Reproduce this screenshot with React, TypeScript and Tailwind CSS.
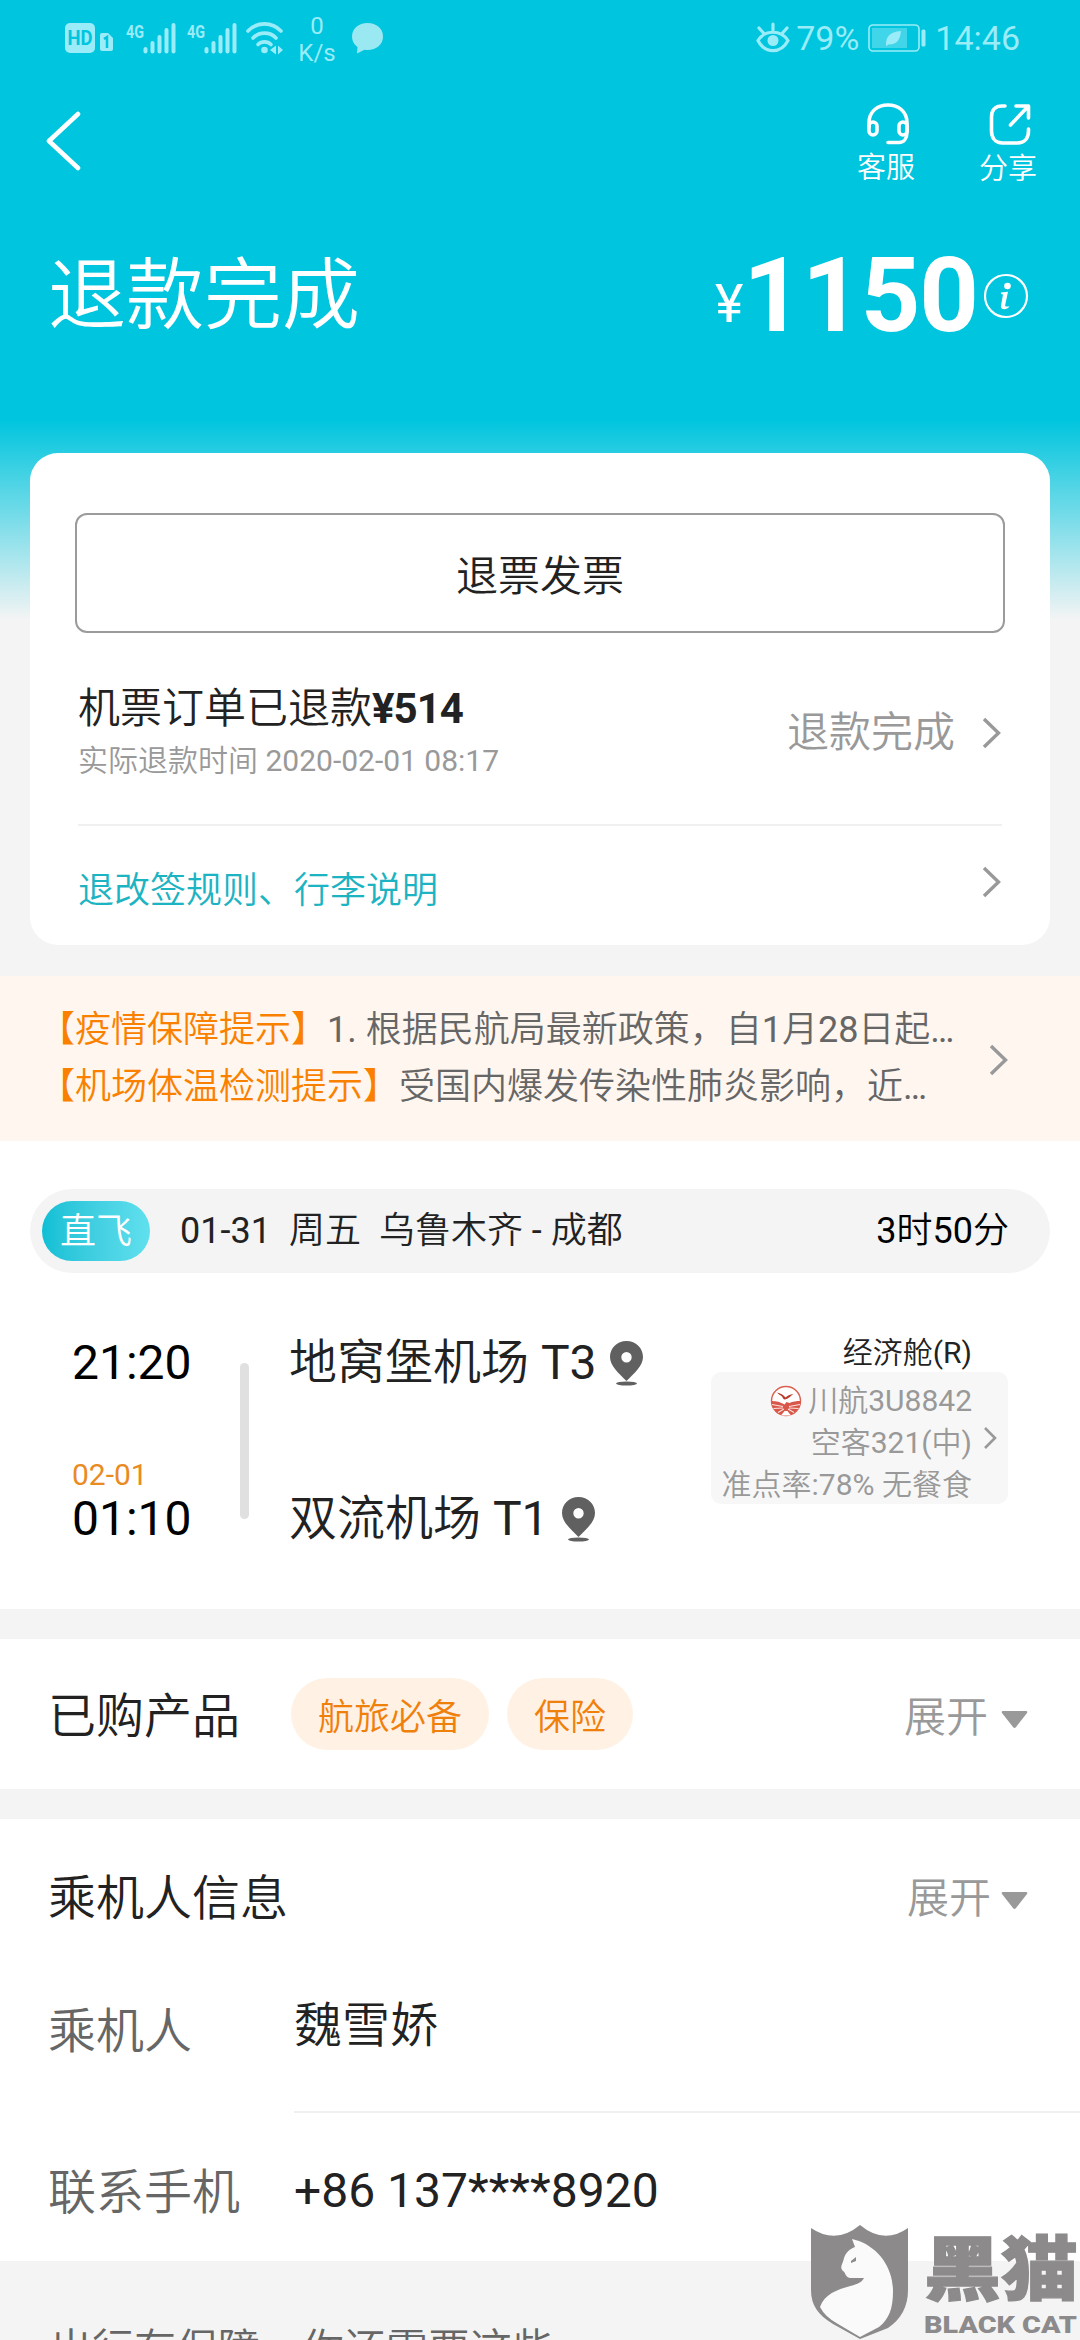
import type { ReactNode } from 'react';
import clsx from 'clsx';

const STATUS_COLOR = '#99ecf8';

function SignalIcon() {
  return (
    <svg width="52" height="34" viewBox="0 0 52 34" fill={STATUS_COLOR}>
      <text x="0" y="17" fontSize="19" fontWeight="700" textLength="18" lengthAdjust="spacingAndGlyphs">4G</text>
      <rect x="17.500" y="26" width="4" height="6.500" rx="2" />
      <rect x="24.500" y="20" width="4" height="12.500" rx="2" />
      <rect x="31.500" y="14" width="4" height="18.500" rx="2" />
      <rect x="38.500" y="7" width="4" height="25.500" rx="2" />
      <rect x="45.500" y="2" width="4" height="30.500" rx="2" />
    </svg>
  );
}

function StatusBar() {
  return (
    <div className="flex h-[76px] items-center pl-[65px] pr-[60px] text-[#99ecf8]">
      <svg width="49" height="30" viewBox="0 0 49 30">
        <rect width="30" height="30" rx="5" fill={STATUS_COLOR} />
        <text x="2.500" y="22" fontSize="20" fontWeight="700" fill="#00c5de" textLength="25" lengthAdjust="spacingAndGlyphs">HD</text>
        <path d="M37 10h6l5 5v11a2 2 0 0 1-2 2h-9a2 2 0 0 1-2-2V12a2 2 0 0 1 2-2z" fill={STATUS_COLOR} />
        <path d="M39 16l3-2v11" fill="none" stroke="#00c5de" strokeWidth="2.500" />
      </svg>
      <div className="ml-[12px] flex gap-[9px]">
        <SignalIcon />
        <SignalIcon />
      </div>
      <svg className="ml-[6px]" width="40" height="34" viewBox="0 0 40 34" fill="none" stroke={STATUS_COLOR} strokeWidth="3.600" strokeLinecap="round">
        <path d="M3 10c9-9.500 24-9.500 33 0" />
        <path d="M8 17c6-6.500 17-6.500 23 0" />
        <path d="M13 23.500c3.500-3.500 9.500-3.500 13 0" />
        <circle cx="19.500" cy="29" r="3.300" fill={STATUS_COLOR} stroke="none" />
        <path d="M25 29l6-4.500v9zM38 29l-5-4.500v9z" fill={STATUS_COLOR} stroke="none" />
      </svg>
      <div className="ml-[14px] mt-[2px] flex w-[36px] flex-col items-center gap-[3px] text-[24px] leading-[24px]">
        <span>0</span>
        <span>K/s</span>
      </div>
      <svg className="ml-[16px]" width="33" height="32" viewBox="0 0 33 32" fill="#99e8f2">
        <path d="M16.500 1C25.500 1 32 6.500 32 14.500S25.500 28 16.500 28c-1 0-2-.100-3-.300L6 31.500l.500-6.500C3 22.500 1 19 1 14.500 1 6.500 7.500 1 16.500 1z" />
      </svg>

      <div className="ml-auto flex items-center">
        <svg width="34" height="32" viewBox="0 0 34 32" fill="none" stroke={STATUS_COLOR} strokeWidth="3.200" strokeLinecap="round">
          <path d="M2 18.500C9 7.500 25 7.500 32 18.500 25 32 9 32 2 18.500z" />
          <path d="M17 8V2M7.500 11L3 6M26.500 11L31 6" />
          <circle cx="17" cy="18.500" r="5.500" fill={STATUS_COLOR} stroke="none" />
        </svg>
        <span className="ml-[6px] text-[34px] leading-none">79%</span>
        <svg className="ml-[9px]" width="59" height="28" viewBox="0 0 59 28">
          <rect x="1" y="1" width="50" height="26" rx="4" fill="none" stroke={STATUS_COLOR} strokeWidth="1.600" />
          <rect x="4" y="4" width="35" height="20" fill="#40d5e8" />
          <path d="M18 21c0-8 3-13 15-14-1 9-4 14-13 13.500l-1.500 2z" fill={STATUS_COLOR} />
          <rect x="53.500" y="5.500" width="4" height="17" rx="1.500" fill={STATUS_COLOR} />
        </svg>
        <span className="ml-[8px] text-[34px] leading-none">14:46</span>
      </div>
    </div>
  );
}

function Chevron({ className }: { className?: string }) {
  return (
    <svg className={className} width="20" height="34" viewBox="0 0 20 34" fill="none" stroke="#999" strokeWidth="3.400">
      <path d="M2 3l14.500 14L2 31" />
    </svg>
  );
}

function PinIcon() {
  return (
    <svg className="ml-[12px]" width="35" height="46" viewBox="0 0 35 46" fill="#606060">
      <path fillRule="evenodd" d="M17.500 1C27 1 34 8 34 17c0 9-9 16.500-16.500 24C10 33.500 1 26 1 17 1 8 8 1 17.500 1zm0 11a5.200 5.200 0 1 0 0 10.400 5.200 5.200 0 0 0 0-10.400z" />
      <ellipse cx="17.500" cy="43.500" rx="10.500" ry="2" />
    </svg>
  );
}

function NavAction({ label, className, children }: { label: string; className?: string; children: ReactNode }) {
  return (
    <div className={clsx('flex w-[60px] flex-col items-center gap-[7px] text-[29px] leading-[32px] text-white', className)}>
      <svg className="ml-[3px]" width="44" height="44" viewBox="0 0 44 44" fill="none" stroke="#fff" strokeWidth="3.600" strokeLinecap="round" strokeLinejoin="round">
        {children}
      </svg>
      <span>{label}</span>
    </div>
  );
}

function Header() {
  return (
    <>
      <div className="flex h-[124px] items-start pl-[45px] pr-[42px]">
        <svg className="mt-[35px]" width="38" height="60" viewBox="0 0 38 60" fill="none" stroke="#fff" strokeWidth="4.600" strokeLinecap="round" strokeLinejoin="round">
          <path d="M33 3L4 30l29 27" />
        </svg>
        <NavAction label="客服" className="ml-auto mt-[25px]">
          <path d="M3 26v-4C3 10 12 4 22 4s19 6 19 18v9c0 6-3 10.500-8 10.500H22" />
          <rect x="3" y="21" width="8" height="13" rx="4" />
          <rect x="33" y="21" width="8" height="13" rx="4" />
        </NavAction>
        <NavAction label="分享" className="ml-[62px] mt-[26px]">
          <path d="M17 4h-3C7 4 3.500 8 3.500 15v14c0 7 4 12 11 12h15c7 0 11-5 11-12v-2" />
          <path d="M28 4h12.500v12M40 4.500L22.500 23" />
        </NavAction>
      </div>
      <div className="flex h-[186px] items-center justify-between pl-[48px] pr-[51px] text-white">
        <span className="mt-[8px] text-[78px] leading-none">退款完成</span>
        <div className="flex items-center">
          <span className="mt-[22px] text-[54px] leading-none">¥</span>
          <span className="mt-[5px] text-[104px] font-bold leading-none tracking-[-1px]">1150</span>
          <svg className="mt-[6px] ml-[5px]" width="46" height="46" viewBox="0 0 46 46">
            <circle cx="23" cy="23" r="21" fill="none" stroke="#fff" strokeWidth="2.200" />
            <circle cx="24.500" cy="13" r="3.300" fill="#fff" />
            <path d="M18 19.500l7-.8-2.800 13.300c-.300 1.600 1 1.800 4.300 1.200-1.500 2.200-3.200 3-5.200 3-2.500 0-3.800-1.200-3.300-3.700l2-11-2-.4z" fill="#fff" />
          </svg>
        </div>
      </div>
    </>
  );
}

function RefundCard() {
  return (
    <div className="mx-[30px] mt-[67px] h-[492px] rounded-[28px] bg-white px-[45px] pt-[60px] text-[#222]">
      <div className="flex h-[120px] items-center justify-center rounded-[12px] border-2 border-[#9b9b9b] text-[42px] leading-none">
        <span className="mt-[7px]">退票发票</span>
      </div>
      <div className="mx-[3px] flex h-[193px] items-start justify-between border-b-2 border-[#f0f0f0] pt-[54px]">
        <div className="flex flex-col gap-[14px]">
          <span className="text-[42px] leading-[44px]">
            机票订单已退款<b className="tracking-[-1px]">¥514</b>
          </span>
          <span className="text-[30px] leading-[32px] text-[#999]">实际退款时间 2020-02-01 08:17</span>
        </div>
        <div className="mt-[23px] flex items-center text-[#999]">
          <span className="text-[42px] leading-[46px]">退款完成</span>
          <Chevron className="ml-[27px]" />
        </div>
      </div>
      <div className="mx-[3px] flex h-[119px] items-center justify-between">
        <span className="mt-[10px] text-[36px] leading-none text-[#1cb3c2]">退改签规则、行李说明</span>
        <Chevron className="-mt-[8px]" />
      </div>
    </div>
  );
}

function NoticeBar() {
  return (
    <div className="mt-[31px] flex h-[165px] items-start justify-between bg-[#fff6f0] pl-[39px] pr-[71px] pt-[26px] text-[36px] leading-[57px] text-[#666]">
      <div className="whitespace-nowrap">
        <p><span className="text-[#fa8100]">【疫情保障提示】</span>1. 根据民航局最新政策，自1月28日起…</p>
        <p><span className="text-[#fa8100]">【机场体温检测提示】</span>受国内爆发传染性肺炎影响，近…</p>
      </div>
      <Chevron className="mt-[41px]" />
    </div>
  );
}

function AirlineLogo() {
  return (
    <svg className="mr-[6px]" width="32" height="32" viewBox="0 0 32 32">
      <circle cx="16" cy="16" r="14.500" fill="#fff" stroke="#d9604f" strokeWidth="1.400" />
      <path d="M1.500 16c5 0 9 1 13 3.500l2-2.500 3 1c3-1.500 7-2 11-2A14.500 14.500 0 0 1 16 30.500 14.500 14.500 0 0 1 1.500 16z" fill="#d8574a" />
      <path d="M2 19.500l11 2M3.500 23.500l9.500-.5M8 27.500l6-3.500M30 19.500l-11 2M28.500 23.500l-9.500-.5M24 27.500l-6-3.500" stroke="#fbe3df" strokeWidth="1.100" />
      <path d="M11 30.500l3.500-4.500h3l3.500 4.500z" fill="#fff" />
      <path d="M7 7.500c3.500.5 6.500 2.500 8.500 5 2-2 4-3 8-3.500-2.500 1.500-4.500 4.500-8.500 5.500-2-.2-2-1.500-3-3C10.500 10 8.500 9.500 7 7.500z" fill="#b9392e" />
    </svg>
  );
}

function FlightSection() {
  return (
    <div className="h-[468px] bg-white pt-[48px]">
      <div className="mx-[30px] flex h-[84px] items-center rounded-full bg-[#f4f4f4] pl-[12px] pr-[41px] text-[36px] leading-none text-[#222]">
        <span className="flex h-[60px] w-[108px] items-center justify-center rounded-full bg-linear-to-r from-[#0cbfd5] to-[#60e0ee] text-white">
          <span className="mt-[2px]">直飞</span>
        </span>
        <span className="ml-[30px]">01-31</span>
        <span className="ml-[18px]">周五</span>
        <span className="ml-[18px]">乌鲁木齐 - 成都</span>
        <span className="ml-auto text-black">3时50分</span>
      </div>
      <div className="mt-[59px] flex items-start">
        <div className="ml-[72px] mt-[1px] flex w-[120px] flex-col text-[48px] leading-[60px] text-black">
          <span>21:20</span>
          <span className="mt-[67px] text-[30px] leading-[30px] text-[#e98b23]">02-01</span>
          <span className="-mt-[1px]">01:10</span>
        </div>
        <div className="ml-[48px] mt-[31px] h-[156px] w-[9px] rounded-full bg-[#e0e0e0]" />
        <div className="ml-[40px] mt-[1px] flex flex-col gap-[96px] text-[48px] leading-[60px] text-[#222]">
          <div className="flex items-center">
            <span>地窝堡机场 T3</span>
            <PinIcon />
          </div>
          <div className="flex items-center">
            <span>双流机场 T1</span>
            <PinIcon />
          </div>
        </div>
        <div className="ml-auto mr-[72px] mt-[2px] w-[297px] text-right text-[30px] leading-[38px] text-[#222]">
          <p className="pr-[36px]">经济舱(R)</p>
          <div className="flex h-[132px] items-center justify-end rounded-[10px] bg-[#f7f7f7] pr-[10px] text-[#999]">
            <div className="flex flex-col whitespace-nowrap pt-[10px] leading-[42px]">
              <span className="flex items-center justify-end"><AirlineLogo />川航3U8842</span>
              <span>空客321(中)</span>
              <span>准点率:78% 无餐食</span>
            </div>
            <svg className="ml-[11px]" width="15" height="24" viewBox="0 0 15 24" fill="none" stroke="#999" strokeWidth="2.600">
              <path d="M2 2l10 10L2 22" />
            </svg>
          </div>
        </div>
      </div>
    </div>
  );
}

function Expand({ className }: { className?: string }) {
  return (
    <div className={clsx('ml-auto flex items-center text-[42px] leading-none text-[#999]', className)}>
      <span>展开</span>
      <svg className="mt-[3px]" width="27" height="19" viewBox="0 0 27 19" fill="#999">
        <path d="M2 1h23q2 0 1 2L15 17q-1.500 1.800-3 0L1 3Q0 1 2 1z" />
      </svg>
    </div>
  );
}

function Tag({ children }: { children: ReactNode }) {
  return (
    <span className="flex h-[72px] items-center rounded-full bg-[#fff2e4] px-[27px] text-[36px] leading-none text-[#f0800c]">
      <span className="mt-[8px]">{children}</span>
    </span>
  );
}

function ProductsSection() {
  return (
    <div className="mt-[30px] flex h-[150px] items-center bg-white pl-[48px] pr-[52px] text-[#222]">
      <span className="mt-[6px] text-[48px] leading-none">已购产品</span>
      <div className="ml-[51px] flex gap-[18px]">
        <Tag>航旅必备</Tag>
        <Tag>保险</Tag>
      </div>
      <Expand className="mt-[7px] gap-[13px]" />
    </div>
  );
}

function PassengerSection() {
  return (
    <div className="mt-[30px] h-[442px] bg-white text-[48px] leading-none text-[#222]">
      <div className="flex h-[160px] items-center pl-[48px] pr-[52px]">
        <span>乘机人信息</span>
        <Expand className="gap-[10px]" />
      </div>
      <div className="flex h-[134px]">
        <span className="w-[294px] pl-[48px] pt-[29px] text-[#666]">乘机人</span>
        <span className="flex-1 border-b-2 border-[#f0f0f0] pt-[23px]">魏雪娇</span>
      </div>
      <div className="flex h-[148px] pt-[56px]">
        <span className="w-[294px] pl-[48px] text-[#666]">联系手机</span>
        <span className="-mt-[2px]">+86 137****8920</span>
      </div>
    </div>
  );
}

function BlackCatMark() {
  return (
    <div className="absolute bottom-0 right-0 flex h-[115px] w-[269px] font-['Roboto','Noto_Sans_CJK_SC',sans-serif]">
      <svg width="98" height="116" viewBox="0 0 98 116">
        <path d="M0 3q25 17 49-3 24 20 48 3v62c0 17-7 29-20 38L49 114 22 99C7 90 0 80 0 65z" fill="#8c8a8b" />
        <path d="M41 14l7 2c21 8 34 28 34 50 0 18-4 28-14 36L49 112 27 99Q14 92 9 82C14 68 28 64 43 60c5-2 8-3 10-7H39c-5-1-4-5-7-7-4-4 0-7 1-13 2-6 6-9 11-11z" fill="#fafafa" />
        <path d="M40 36l5-4v4l-5 2z" fill="#8c8a8b" />
      </svg>
      <svg className="ml-[15px]" width="156" height="116" viewBox="0 0 156 116" fill="#8c8a8b">
        <g transform="scale(1 0.9)">
          <text x="0" y="78" fontSize="78" fontWeight="900" textLength="154" lengthAdjust="spacingAndGlyphs" stroke="#8c8a8b" strokeWidth="1.500">黑猫</text>
        </g>
        <text x="0" y="108" fontSize="24" fontWeight="900" textLength="153" lengthAdjust="spacingAndGlyphs">BLACK CAT</text>
      </svg>
    </div>
  );
}

function App() {
  return (
    <div className="relative h-[2340px] w-[1080px] overflow-hidden bg-[linear-gradient(180deg,#00c5de_420px,#f4f4f4_620px)] font-['Roboto','Noto_Sans_CJK_SC_DemiLight','Noto_Sans_CJK_SC',sans-serif]">
      <StatusBar />
      <Header />
      <RefundCard />
      <NoticeBar />
      <FlightSection />
      <ProductsSection />
      <PassengerSection />
      <p className="mt-[68px] pl-[50px] text-[42px] leading-none text-[#666]">出行有保障，你还需要这些</p>
      <BlackCatMark />
    </div>
  );
}

export default App;
